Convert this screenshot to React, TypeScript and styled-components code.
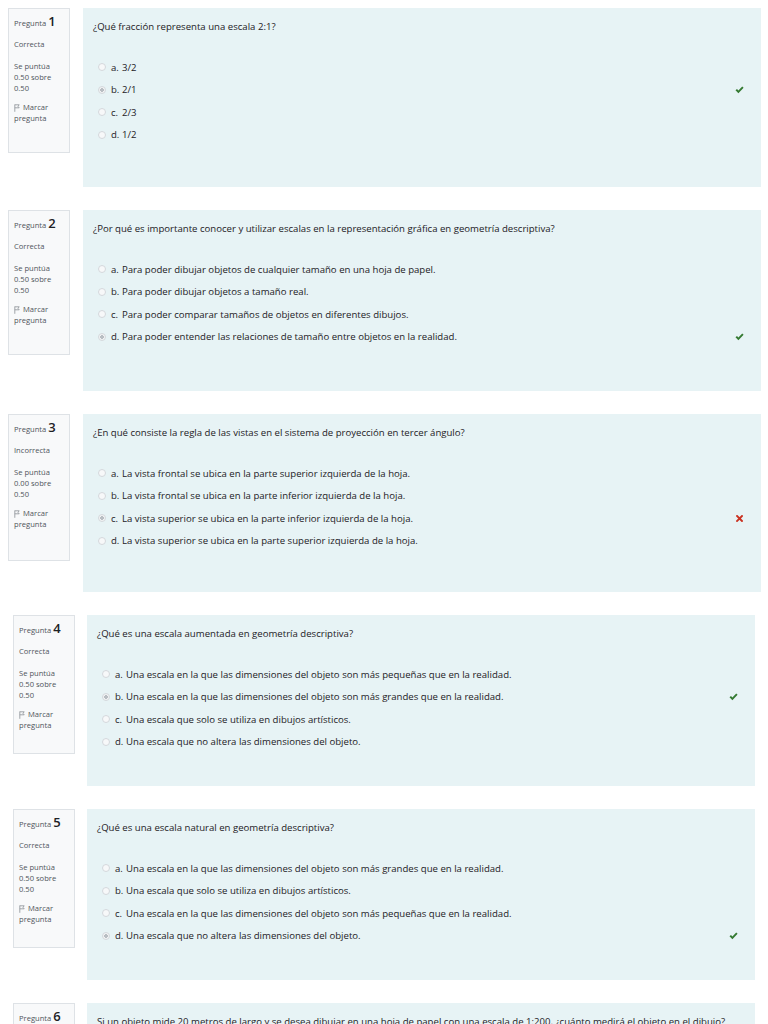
import React from "react";
import styled, { createGlobalStyle } from "styled-components";

const Global = createGlobalStyle`
  html, body { margin: 0; padding: 0; background: #ffffff; }
  body { font-family: "Open Sans", "Noto Sans", sans-serif; color: #1d2125; }
`;

const Page = styled.div`
  display: flex;
  flex-direction: column;
  padding-top: 8px;
  gap: 23px;
  height: 1024px;
  overflow: hidden;
`;

const Question = styled.section<{ $inset?: boolean }>`
  display: flex;
  align-items: flex-start;
  gap: ${(p) => (p.$inset ? "12px" : "13px")};
  padding-left: ${(p) => (p.$inset ? "13px" : "8px")};
  padding-right: ${(p) => (p.$inset ? "13px" : "7px")};
`;

const Info = styled.div<{ $h: number }>`
  box-sizing: border-box;
  width: 62px;
  flex: none;
  height: ${(p) => p.$h}px;
  background: #f8f9fa;
  border: 1px solid #dee2e6;
  padding: 5px 3px 0 5px;
  font-size: 7.6px;
  line-height: 11px;
  color: #4f555b;
`;

const QNo = styled.div`
  display: flex;
  align-items: baseline;
  gap: 2px;
  margin-bottom: 10px;
`;

const QNum = styled.span`
  font-size: 13px;
  line-height: 14px;
  font-weight: 600;
  color: #1d2125;
`;

const State = styled.div`
  margin-bottom: 11px;
`;

const Grade = styled.div`
  margin-bottom: 8px;
`;

const Flag = styled.div`
  display: flex;
  flex-direction: column;
`;

const FlagLine = styled.span`
  display: flex;
  align-items: center;
  gap: 3px;
`;

const Content = styled.div<{ $h: number }>`
  box-sizing: border-box;
  flex: 1;
  min-width: 0;
  height: ${(p) => p.$h}px;
  background: #e7f3f5;
  padding: 13px 17px 0 10px;
`;

const Prompt = styled.div`
  font-size: 9.6px;
  line-height: 12px;
  color: #1d2125;
  white-space: nowrap;
`;

const Options = styled.div`
  display: flex;
  flex-direction: column;
  margin-top: 23px;
  padding-left: 5px;
`;

const Option = styled.div`
  display: flex;
  align-items: center;
  height: 22.5px;
  font-size: 9.6px;
  color: #1d2125;
`;

const Radio = styled.span<{ $on?: boolean }>`
  box-sizing: border-box;
  width: 8px;
  height: 8px;
  flex: none;
  border-radius: 50%;
  border: 1px solid #d4d8dc;
  background: ${(p) => (p.$on ? "radial-gradient(circle, #b9bec3 0 1.6px, #f3f4f5 2px)" : "#f7f8f9")};
  margin-right: 5px;
`;

const Letter = styled.span`
  width: 11px;
  flex: none;
`;

const Text = styled.span`
  flex: 1;
  white-space: nowrap;
`;

const Mark = styled.span`
  display: flex;
  align-items: center;
  justify-content: center;
  width: 10px;
  flex: none;
`;

const FlagIcon = () => (
  <svg width="6" height="8" viewBox="0 0 6 8" fill="none" stroke="#8a9096" strokeWidth="0.8">
    <path d="M0.8 0.5 V7.8" />
    <path d="M0.8 0.8 H5.2 L4 2.3 L5.2 3.8 H0.8" />
  </svg>
);

const Check = () => (
  <svg width="9" height="8" viewBox="0 0 9 8">
    <path d="M0.5 4.3 L2 2.9 L3.4 4.4 L7.2 0.4 L8.6 1.8 L3.4 7.2 Z" fill="#357a32" />
  </svg>
);

const Cross = () => (
  <svg width="7" height="7" viewBox="0 0 7 7">
    <path d="M1 1 L6 6 M6 1 L1 6" stroke="#ca3120" strokeWidth="1.9" strokeLinecap="square" />
  </svg>
);

type Q = {
  n: number;
  state: string;
  score: string;
  prompt: string;
  options: string[];
  chosen: number;
  correct: boolean;
  inset?: boolean;
  infoH: number;
  contentH: number;
};

const questions: Q[] = [
  {
    n: 1,
    state: "Correcta",
    score: "0.50",
    prompt: "¿Qué fracción representa una escala 2:1?",
    options: ["3/2", "2/1", "2/3", "1/2"],
    chosen: 1,
    correct: true,
    infoH: 145,
    contentH: 179,
  },
  {
    n: 2,
    state: "Correcta",
    score: "0.50",
    prompt:
      "¿Por qué es importante conocer y utilizar escalas en la representación gráfica en geometría descriptiva?",
    options: [
      "Para poder dibujar objetos de cualquier tamaño en una hoja de papel.",
      "Para poder dibujar objetos a tamaño real.",
      "Para poder comparar tamaños de objetos en diferentes dibujos.",
      "Para poder entender las relaciones de tamaño entre objetos en la realidad.",
    ],
    chosen: 3,
    correct: true,
    infoH: 145,
    contentH: 181,
  },
  {
    n: 3,
    state: "Incorrecta",
    score: "0.00",
    prompt: "¿En qué consiste la regla de las vistas en el sistema de proyección en tercer ángulo?",
    options: [
      "La vista frontal se ubica en la parte superior izquierda de la hoja.",
      "La vista frontal se ubica en la parte inferior izquierda de la hoja.",
      "La vista superior se ubica en la parte inferior izquierda de la hoja.",
      "La vista superior se ubica en la parte superior izquierda de la hoja.",
    ],
    chosen: 2,
    correct: false,
    infoH: 147,
    contentH: 178,
  },
  {
    n: 4,
    state: "Correcta",
    score: "0.50",
    prompt: "¿Qué es una escala aumentada en geometría descriptiva?",
    options: [
      "Una escala en la que las dimensiones del objeto son más pequeñas que en la realidad.",
      "Una escala en la que las dimensiones del objeto son más grandes que en la realidad.",
      "Una escala que solo se utiliza en dibujos artísticos.",
      "Una escala que no altera las dimensiones del objeto.",
    ],
    chosen: 1,
    correct: true,
    inset: true,
    infoH: 139,
    contentH: 171,
  },
  {
    n: 5,
    state: "Correcta",
    score: "0.50",
    prompt: "¿Qué es una escala natural en geometría descriptiva?",
    options: [
      "Una escala en la que las dimensiones del objeto son más grandes que en la realidad.",
      "Una escala que solo se utiliza en dibujos artísticos.",
      "Una escala en la que las dimensiones del objeto son más pequeñas que en la realidad.",
      "Una escala que no altera las dimensiones del objeto.",
    ],
    chosen: 3,
    correct: true,
    inset: true,
    infoH: 139,
    contentH: 171,
  },
  {
    n: 6,
    state: "Correcta",
    score: "0.50",
    prompt:
      "Si un objeto mide 20 metros de largo y se desea dibujar en una hoja de papel con una escala de 1:200, ¿cuánto medirá el objeto en el dibujo?",
    options: [],
    chosen: -1,
    correct: true,
    inset: true,
    infoH: 139,
    contentH: 171,
  },
];

const letters = ["a.", "b.", "c.", "d."];

export default function App() {
  return (
    <>
      <Global />
      <Page>
        {questions.map((q) => (
          <Question key={q.n} $inset={q.inset}>
            <Info $h={q.infoH}>
              <QNo>
                Pregunta <QNum>{q.n}</QNum>
              </QNo>
              <State>{q.state}</State>
              <Grade>
                Se puntúa
                <br />
                {q.score} sobre
                <br />
                0.50
              </Grade>
              <Flag>
                <FlagLine>
                  <FlagIcon /> Marcar
                </FlagLine>
                <span>pregunta</span>
              </Flag>
            </Info>
            <Content $h={q.contentH}>
              <Prompt>{q.prompt}</Prompt>
              {q.options.length > 0 && (
                <Options>
                  {q.options.map((o, i) => (
                    <Option key={i}>
                      <Radio $on={i === q.chosen} />
                      <Letter>{letters[i]}</Letter>
                      <Text>{o}</Text>
                      <Mark>{i === q.chosen ? q.correct ? <Check /> : <Cross /> : null}</Mark>
                    </Option>
                  ))}
                </Options>
              )}
            </Content>
          </Question>
        ))}
      </Page>
    </>
  );
}
